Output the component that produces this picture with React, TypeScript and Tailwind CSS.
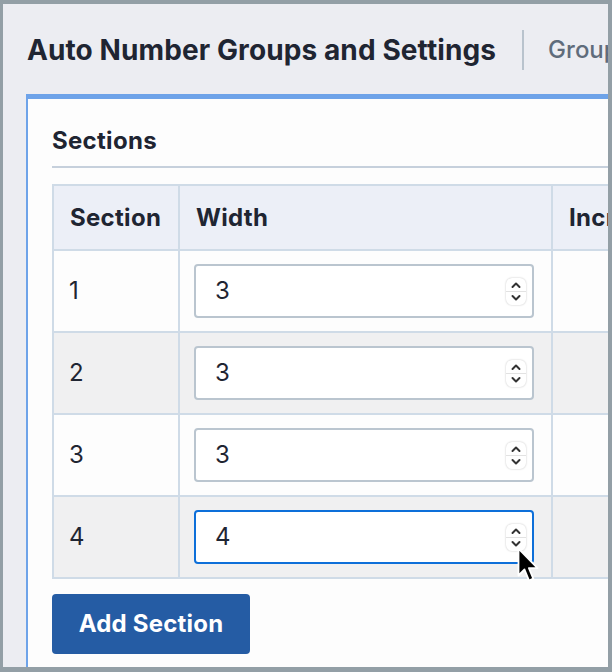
import React from "react";

const rows = [
  { n: 1, w: 3, bg: "bg-[#fdfdfd]" },
  { n: 2, w: 3, bg: "bg-[#f0f0f1]" },
  { n: 3, w: 3, bg: "bg-[#fdfdfd]" },
  { n: 4, w: 4, bg: "bg-[#f0f0f1]", focus: true },
];

function Spinner() {
  return (
    <div className="flex flex-col w-[20px] h-[27px] rounded-[6px] bg-white shadow-[0_0_2px_rgba(0,0,0,0.25)] items-center justify-center">
      <svg width="12" height="8" viewBox="0 0 12 8" className="mb-[2px]">
        <path d="M2.5 6 L6 2.5 L9.5 6" fill="none" stroke="#333" strokeWidth="2" strokeLinecap="round" strokeLinejoin="round" />
      </svg>
      <div className="w-[20px] h-px bg-[#e2e2e2]" />
      <svg width="12" height="8" viewBox="0 0 12 8" className="mt-[2px]">
        <path d="M2.5 2 L6 5.5 L9.5 2" fill="none" stroke="#333" strokeWidth="2" strokeLinecap="round" strokeLinejoin="round" />
      </svg>
    </div>
  );
}

function Cursor() {
  return (
    <svg width="26" height="40" viewBox="0 0 26 40" className="absolute left-[516px] top-[546px] pointer-events-none">
      <g transform="translate(2.5 2.5)">
        <path d="M0 0 L0 27 L6 21 L10.5 32 L14.8 30.2 L10.4 19.6 L19 19.6 Z" fill="#000" stroke="#fff" strokeWidth="1.8" strokeLinejoin="round" />
      </g>
    </svg>
  );
}

export default function App() {
  return (
    <div className="relative w-[612px] h-[672px] bg-[#939fa6] pt-[4px] pl-[3px] pr-[4px] pb-[5px]" style={{ fontFamily: "Inter, 'Liberation Sans', sans-serif" }}>
      <div className="w-full h-full bg-[#ecedf2] overflow-hidden">
        <div className="flex items-center h-[90px] pl-[24px] pt-[2px]">
          <h1 className="text-[28px] font-bold text-[#1f2532] whitespace-nowrap tracking-[0.1px]">Auto Number Groups and Settings</h1>
          <div className="w-[2px] h-[40px] bg-[#b9c3cd] ml-[26px] shrink-0" />
          <span className="ml-[24px] text-[24px] font-medium text-[#5f6c7b] whitespace-nowrap">Groups</span>
        </div>
        <div className="ml-[23px] w-[620px] h-[600px] bg-[#fdfdfd] border-t-[5px] border-l-2 border-[#6ea3e9] pl-[24px] pt-[27px] overflow-hidden">
          <h2 className="text-[24px] font-bold text-[#1f2532] leading-[30px] tracking-[0.3px]">Sections</h2>
          <div className="h-[2px] bg-[#c6d0dc] mt-[10px]" />
          <table className="mt-[16px] border-collapse table-fixed w-[700px] text-[24px] text-[#1f2532]">
            <colgroup>
              <col className="w-[126px]" />
              <col className="w-[373px]" />
              <col className="w-[201px]" />
            </colgroup>
            <thead>
              <tr className="bg-[#eceff7] h-[65px]">
                <th className="border-2 border-[#cfdbe7] text-left font-bold pl-[16px] tracking-[0.3px]">Section</th>
                <th className="border-2 border-[#cfdbe7] text-left font-bold pl-[16px] tracking-[0.3px]">Width</th>
                <th className="border-2 border-[#cfdbe7] text-left font-bold pl-[16px] tracking-[0.3px] whitespace-nowrap">Increment</th>
              </tr>
            </thead>
            <tbody>
              {rows.map(r => (
                <tr key={r.n} className={`${r.bg} h-[82px]`}>
                  <td className="border-2 border-[#cfdbe7] pl-[15px]">{r.n}</td>
                  <td className="border-2 border-[#cfdbe7] pl-[14px] pr-[17px]">
                    <div className={`flex items-center justify-between h-[54px] rounded-[4px] bg-white pl-[19px] pr-[6px] ${r.focus ? "border-2 border-[#0d6fd9]" : "border-2 border-[#bac5cf]"}`}>
                      <span>{r.w}</span>
                      <Spinner />
                    </div>
                  </td>
                  <td className="border-2 border-[#cfdbe7]" />
                </tr>
              ))}
            </tbody>
          </table>
          <button className="mt-[15px] w-[198px] h-[60px] rounded-[4px] bg-[#255ca4] text-white text-[24px] font-bold tracking-[0.2px]">Add Section</button>
        </div>
      </div>
      <Cursor />
    </div>
  );
}
